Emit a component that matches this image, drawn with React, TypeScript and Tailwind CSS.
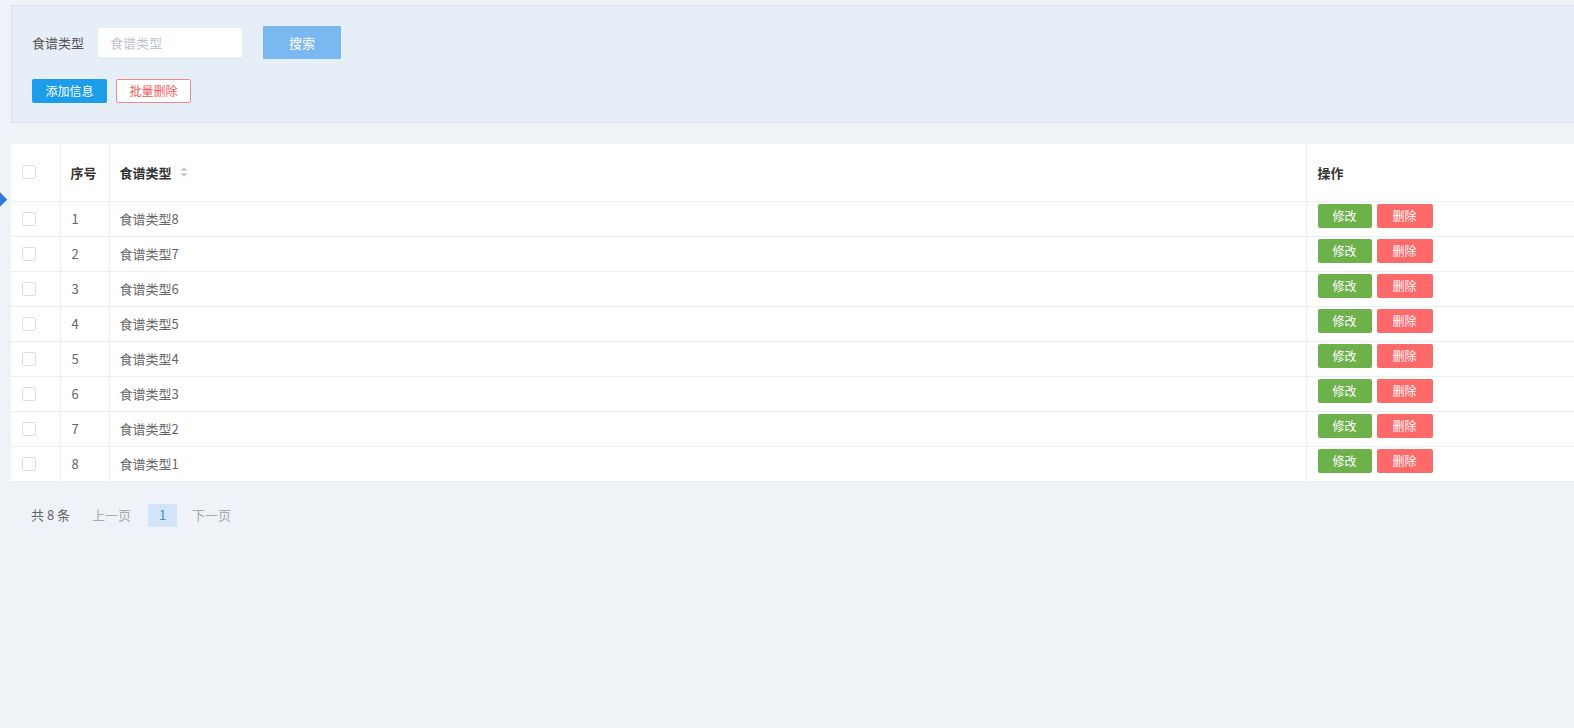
import React from "react"

const rows = [8, 7, 6, 5, 4, 3, 2, 1]

function Box() {
  return <span className="block h-[14px] w-[14px] rounded-[2px] border border-[#dcdfe6] bg-white" />
}

export default function App() {
  return (
    <div
      className="relative h-[728px] w-full overflow-hidden bg-[#eff3f8] pl-[11px] pt-[5px]"
      style={{ fontFamily: '"Noto Sans CJK SC", "Noto Sans", sans-serif' }}
    >
      {/* search panel */}
      <div className="flex h-[118px] flex-col border-t border-b border-l border-[#d9e2ed] bg-[#e6eef8] px-[20px] pt-[20px]">
        <div className="flex h-[33px] items-center">
          <span className="text-[13px] text-[#555]">食谱类型</span>
          <input
            placeholder="食谱类型"
            className="ml-[14px] h-[29px] w-[144px] bg-white px-[12px] text-[13px] text-[#555] outline-none placeholder:text-[#c0c4cc]"
          />
          <button className="ml-[21px] h-[33px] w-[78px] bg-[#79b8f0] text-[13px] text-white">搜索</button>
        </div>
        <div className="mt-[20px] flex gap-[9px]">
          <button className="h-[24px] w-[75px] rounded-[2px] bg-[#1b9de9] text-[12px] text-white">添加信息</button>
          <button className="h-[24px] w-[75px] rounded-[2px] border border-[#f08a8a] bg-white text-[12px] text-[#f05a5a]">
            批量删除
          </button>
        </div>
      </div>

      {/* table */}
      <table className="mt-[21px] w-[1600px] table-fixed border-collapse bg-white text-[13px]">
        <colgroup>
          <col className="w-[49px]" />
          <col className="w-[49px]" />
          <col className="w-[1197px]" />
          <col />
        </colgroup>
        <thead>
          <tr className="h-[57px] border-b border-[#ebeef5]">
            <th className="border-r border-[#ebeef5] pl-[11px] text-left">
              <Box />
            </th>
            <th className="border-r border-[#ebeef5] pl-[10px] text-left font-bold text-[#333]">序号</th>
            <th className="border-r border-[#ebeef5] pl-[10px] text-left font-bold text-[#333]">
              <span className="inline-flex items-center gap-[8px]">
                食谱类型
                <svg width="8" height="12" viewBox="0 0 8 12">
                  <path d="M4 1 L7.5 5 H0.5 Z" fill="#c8ccd3" />
                  <path d="M4 11 L7.5 7 H0.5 Z" fill="#c8ccd3" />
                </svg>
              </span>
            </th>
            <th className="pl-[11px] text-left font-bold text-[#333]">操作</th>
          </tr>
        </thead>
        <tbody>
          {rows.map((n, i) => (
            <tr key={n} className="h-[35px] border-b border-[#ebeef5] text-[#666]">
              <td className="border-r border-[#ebeef5] pl-[11px]">
                <Box />
              </td>
              <td className="border-r border-[#ebeef5] pl-[11px]">{i + 1}</td>
              <td className="border-r border-[#ebeef5] pl-[10px]">食谱类型{n}</td>
              <td className="pl-[11px] pt-[2px] align-top">
                <div className="flex gap-[5px]">
                  <button className="h-[24px] w-[54px] rounded-[2px] bg-[#6cb14a] text-[12px] text-white">修改</button>
                  <button className="h-[24px] w-[56px] rounded-[2px] bg-[#fe6a6a] text-[12px] text-white">删除</button>
                </div>
              </td>
            </tr>
          ))}
        </tbody>
      </table>

      {/* pagination */}
      <div className="mt-[22px] flex h-[23px] items-center pl-[20px] text-[13px]">
        <span className="text-[#666]">共 8 条</span>
        <span className="ml-[22px] text-[#aaa]">上一页</span>
        <span className="ml-[17px] flex h-[23px] w-[29px] items-center justify-center bg-[#d2e5f8] text-[#3b8fe0]">1</span>
        <span className="ml-[15px] text-[#aaa]">下一页</span>
      </div>

      {/* side marker */}
      <span className="absolute left-[-6px] top-[194px] h-[11px] w-[11px] rotate-45 bg-[#2f78d6]" />
    </div>
  )
}
